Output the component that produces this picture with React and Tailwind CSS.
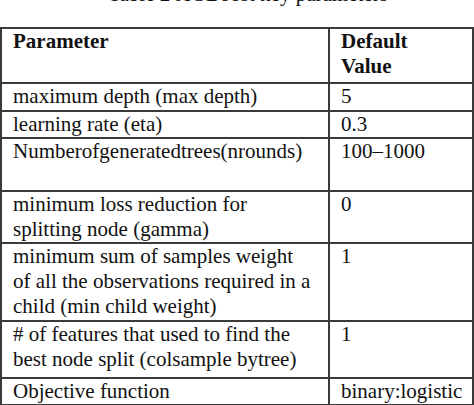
const rows = [
  { h: 'h-[28px]', param: ['maximum depth (max depth)'], value: '5' },
  { h: 'h-[27px]', param: ['learning rate (eta)'], value: '0.3' },
  { h: 'h-[53px]', param: ['Numberofgeneratedtrees(nrounds)'], value: '100–1000' },
  { h: 'h-[52px]', param: ['minimum loss reduction for', 'splitting node (gamma)'], value: '0' },
  {
    h: 'h-[78px]',
    param: ['minimum sum of samples weight', 'of all the observations required in a', 'child (min child weight)'],
    value: '1',
  },
  { h: 'h-[57px]', param: ['# of features that used to find the', 'best node split (colsample bytree)'], value: '1' },
  { h: 'h-[27px]', param: ['Objective function'], value: 'binary:logistic' },
]

const serif = '[font-family:Liberation_Serif,Times_New_Roman,Times,serif]'
const cell = `border-2 border-[#3a3a3a] align-top pl-[11px] text-[21px] leading-[25px] text-[#111] whitespace-nowrap ${serif}`

export default function App() {
  return (
    <div className={`w-[474px] h-[405px] overflow-hidden bg-white text-[#111] ${serif}`}>
      {/* caption, mostly cropped off the top */}
      <div className="h-[27px] overflow-hidden">
        <p className={`-mt-[17px] text-center text-[21px] leading-[23px] pl-[22px] ${serif}`}>
          Table 2 XGBoost key parameters
        </p>
      </div>
      <table className="w-[474px] border-collapse border-2 border-[#3a3a3a] table-fixed">
        <colgroup>
          <col className="w-[328px]" />
          <col />
        </colgroup>
        <thead>
          <tr className="h-[55px]">
            <th className={`${cell} text-left font-bold pt-0`}>Parameter</th>
            <th className={`${cell} text-left font-bold pt-0`}>
              Default
              <br />
              Value
            </th>
          </tr>
        </thead>
        <tbody>
          {rows.map((r, i) => (
            <tr key={i} className={r.h}>
              <td className={`${cell} pt-0`}>
                {r.param.map((line, j) => (
                  <div key={j}>{line}</div>
                ))}
              </td>
              <td className={`${cell} pt-0`}>{r.value}</td>
            </tr>
          ))}
        </tbody>
      </table>
    </div>
  )
}
